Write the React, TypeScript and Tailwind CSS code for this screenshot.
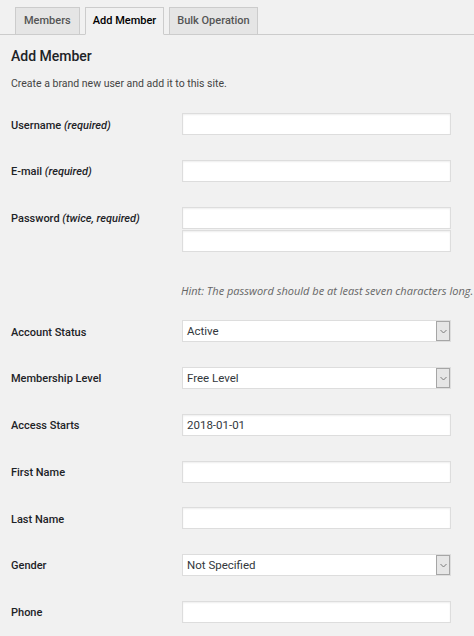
import { ReactNode } from 'react';

const font = { fontFamily: 'Roboto, "Open Sans", Arial, sans-serif' };

function TextInput({ value }: { value?: string }) {
  return (
    <div className="h-[22px] w-[269px] border border-[#dddddd] bg-white px-[4px] text-[11.5px] leading-[20px] text-[#32373c] shadow-[inset_0_1px_2px_rgba(0,0,0,0.07)]">
      {value}
    </div>
  );
}

function SelectBox({ value }: { value: string }) {
  return (
    <div className="flex h-[22px] w-[269px] border border-[#dddddd] bg-white text-[11.5px] leading-[20px] text-[#32373c]">
      <span className="flex-1 px-[4px]">{value}</span>
      <span className="flex w-[14px] items-center justify-center border border-[#a6a6a6] bg-[#e6e6e6]">
        <svg width="7" height="5" viewBox="0 0 7 5">
          <path d="M0.5 1 L3.5 4 L6.5 1" fill="none" stroke="#7a7a7a" strokeWidth="1" />
        </svg>
      </span>
    </div>
  );
}

function Row({ label, children }: { label: ReactNode; children: ReactNode }) {
  return (
    <div className="flex h-[46.75px] items-center">
      <div className="w-[171px] pt-[3px] text-[11px] font-medium text-[#1d2327]">{label}</div>
      {children}
    </div>
  );
}

export default function App() {
  return (
    <div className="h-[636px] w-[474px] overflow-hidden bg-[#f1f1f1]" style={font}>
      {/* tabs */}
      <div className="flex gap-[5px] border-b border-[#cccccc] pl-[15px] pt-[7px]">
        <div className="mb-[-1px] border border-[#cccccc] bg-[#e5e5e5] px-[8px] text-[11px] leading-[26px] font-medium text-[#555555]">
          Members
        </div>
        <div className="mb-[-1px] border border-b-[#f1f1f1] border-[#cccccc] bg-[#f1f1f1] px-[7px] text-[11px] leading-[26px] font-medium text-[#000000]">
          Add Member
        </div>
        <div className="mb-[-1px] border border-[#cccccc] bg-[#e5e5e5] px-[7px] text-[11px] leading-[26px] font-medium text-[#555555]">
          Bulk Operation
        </div>
      </div>

      <div className="pl-[11px]">
        <h2 className="mt-[10px] text-[14px] leading-[22px] font-medium text-[#1d2327]">Add Member</h2>
        <p className="mt-[8px] text-[10.5px] leading-[18px] text-[#444444]">
          Create a brand new user and add it to this site.
        </p>

        <div className="mt-[8px]">
          <Row label={<>Username <i>(required)</i></>}>
            <TextInput />
          </Row>
          <Row label={<>E-mail <i>(required)</i></>}>
            <TextInput />
          </Row>

          {/* password */}
          <div className="flex pt-[12px]">
            <div className="w-[171px] pt-[4px] text-[11px] font-medium text-[#1d2327]">
              Password <i>(twice, required)</i>
            </div>
            <div className="flex flex-col gap-[1px]">
              <TextInput />
              <TextInput />
            </div>
          </div>
          <p
            className="ml-[170px] mt-[30px] mb-[8.5px] whitespace-nowrap text-[11px] leading-[18px] italic text-[#666666]"
            style={{ fontFamily: '"Open Sans", Arial, sans-serif' }}
          >
            Hint: The password should be at least seven characters long.
          </p>

          <Row label="Account Status">
            <SelectBox value="Active" />
          </Row>
          <Row label="Membership Level">
            <SelectBox value="Free Level" />
          </Row>
          <Row label="Access Starts">
            <TextInput value="2018-01-01" />
          </Row>
          <Row label="First Name">
            <TextInput />
          </Row>
          <Row label="Last Name">
            <TextInput />
          </Row>
          <Row label="Gender">
            <SelectBox value="Not Specified" />
          </Row>
          <Row label="Phone">
            <TextInput />
          </Row>
        </div>
      </div>
    </div>
  );
}
